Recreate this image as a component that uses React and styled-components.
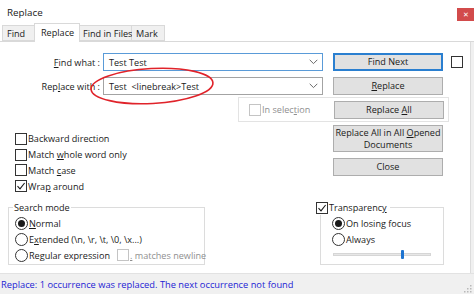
import React from "react";
import styled, { createGlobalStyle } from "styled-components";

const GlobalStyle = createGlobalStyle`
  html, body { margin: 0; padding: 0; background: #ffffff; }
  body { font-family: "Open Sans", "Noto Sans", "Liberation Sans", sans-serif; font-size: 9.1px; color: #1a1a1a; }
  * { box-sizing: border-box; }
`;

const Window = styled.div`
  width: 474px;
  height: 294px;
  display: flex;
  flex-direction: column;
  background: #ffffff;
  overflow: hidden;
`;

const TitleBar = styled.div`
  height: 24px;
  display: flex;
  align-items: center;
  justify-content: space-between;
  padding-left: 7px;
  font-size: 9.8px;
`;

const CloseButton = styled.div`
  width: 17px;
  height: 13px;
  margin-top: 8px;
  align-self: flex-start;
  background: #d24b4b;
  color: #fff;
  font-size: 7px;
  line-height: 13px;
  text-align: center;
`;

const TabStrip = styled.div`
  height: 18px;
  display: flex;
  align-items: flex-end;
  padding-left: 2px;
  border-bottom: 1px solid #d9d9d9;
`;

const Tab = styled.div`
  height: ${(p) => (p.$active ? "19px" : "16px")};
  width: ${(p) => p.$w}px;
  margin-bottom: ${(p) => (p.$active ? "-1px" : "0")};
  margin-left: ${(p) => (p.$active ? "-1px" : "0")};
  margin-right: ${(p) => (p.$active ? "-1px" : "0")};
  padding-left: ${(p) => (p.$active ? "6px" : "4px")};
  padding-bottom: ${(p) => (p.$active ? "2px" : "0")};
  background: ${(p) => (p.$active ? "#ffffff" : "#f0f0f0")};
  border: 1px solid #d9d9d9;
  border-bottom: ${(p) => (p.$active ? "none" : "1px solid #d9d9d9")};
  border-left: ${(p) => (p.$first || p.$active ? "1px solid #d9d9d9" : "none")};
  display: flex;
  align-items: center;
  white-space: nowrap;
  position: relative;
  z-index: ${(p) => (p.$active ? 1 : 0)};
`;

const Main = styled.div`
  display: flex;
  background: #f0f0f0;
`;

const Panel = styled.div`
  position: relative;
  width: 471px;
  height: 231px;
  background: #ffffff;
  border-right: 1px solid #dcdcdc;
  display: flex;
  flex-direction: column;
  padding-top: 11px;
`;

const FieldRow = styled.div`
  display: grid;
  grid-template-columns: 103px 230px 118px 12px;
  height: 18px;
  margin-top: ${(p) => p.$mt || 0}px;
  align-items: center;
`;

const FieldLabel = styled.div`
  text-align: right;
  padding-right: 3px;
  white-space: nowrap;
`;

const Combo = styled.div`
  height: 18px;
  width: 220px;
  border: 1px solid ${(p) => (p.$focus ? "#5a9bd8" : "#a3a3a3")};
  background: #fff;
  display: flex;
  align-items: center;
  justify-content: space-between;
  padding: 0 4px 0 5px;
  white-space: pre;
`;

const DialogButton = styled.div`
  width: 110px;
  height: ${(p) => p.$h || 18}px;
  background: #e1e1e1;
  border: 1px solid ${(p) => (p.$default ? "#2a7fd0" : "#adadad")};
  box-shadow: ${(p) => (p.$default ? "inset 0 0 0 1px #2a7fd0" : "none")};
  display: flex;
  align-items: center;
  justify-content: center;
  text-align: center;
  line-height: 12px;
  flex-shrink: 0;
`;

const ButtonText = styled.span`
  display: block;
  white-space: pre-line;
`;

const BoxShape = styled.span`
  width: 12px;
  height: 12px;
  border: 1px solid ${(p) => (p.$disabled ? "#c4c4c4" : "#333333")};
  background: #fff;
  display: inline-flex;
  align-items: center;
  justify-content: center;
  flex-shrink: 0;
`;

const RadioShape = styled.span`
  width: 13px;
  height: 13px;
  border-radius: 50%;
  border: 1px solid #333333;
  background: #fff;
  display: inline-flex;
  align-items: center;
  justify-content: center;
  flex-shrink: 0;
  &::after {
    content: "";
    width: 7px;
    height: 7px;
    border-radius: 50%;
    background: ${(p) => (p.$on ? "#1a1a1a" : "transparent")};
  }
`;

const U = styled.span`
  text-decoration: underline;
  text-underline-offset: 1px;
`;

const Option = styled.div`
  display: flex;
  align-items: center;
  height: 16px;
  gap: 1px;
  color: ${(p) => (p.$disabled ? "#8f8f8f" : "inherit")};
  white-space: nowrap;
  margin-left: ${(p) => p.$ml || 0}px;
`;

const SelectionGroup = styled.div`
  margin-top: 2px;
  margin-left: 238px;
  width: 211px;
  height: 25px;
  border: 1px solid #e3e3e3;
  display: flex;
  align-items: center;
  padding-left: 10px;
  padding-right: 4px;
  justify-content: space-between;
`;

const Middle = styled.div`
  display: flex;
  height: 72px;
`;

const OptionsList = styled.div`
  padding-left: 15px;
  margin-top: 9px;
  display: flex;
  flex-direction: column;
`;

const ButtonColumn = styled.div`
  margin-left: auto;
  margin-right: 27px;
  margin-top: 3px;
  display: flex;
  flex-direction: column;
  gap: 6px;
`;

const BottomRow = styled.div`
  display: flex;
  margin-top: 13px;
`;

const GroupBox = styled.div`
  position: relative;
  border: 1px solid #dcdcdc;
  height: 58px;
  width: ${(p) => p.$w}px;
  margin-left: ${(p) => p.$ml || "0"};
  margin-right: ${(p) => p.$mr || 0}px;
  padding: ${(p) => p.$pad};
  display: flex;
  flex-direction: column;
`;

const GroupTitle = styled.div`
  position: absolute;
  top: -8px;
  left: ${(p) => p.$left}px;
  background: #fff;
  padding: 0 ${(p) => p.$padR || 1}px 0 1px;
  display: flex;
  align-items: center;
  gap: 1px;
  height: 15px;
  white-space: nowrap;
`;

const SliderRow = styled.div`
  height: 14px;
  display: flex;
  align-items: center;
  padding-left: 1px;
`;

const Track = styled.div`
  position: relative;
  width: 98px;
  height: 3px;
  background: #e7e7e7;
  border: 1px solid #d6d6d6;
`;

const Thumb = styled.div`
  position: absolute;
  left: 67px;
  top: -4px;
  width: 3px;
  height: 9px;
  background: #1e74d0;
  border-radius: 1px;
`;

const StatusBar = styled.div`
  height: 21px;
  background: #f0f0f0;
  border-top: 1px solid #e2e2e2;
  display: flex;
  align-items: center;
  justify-content: space-between;
  padding-left: 1px;
  color: #2323d4;
  font-size: 9.3px;
`;

const Grip = styled.svg`
  align-self: flex-end;
  margin-right: 2px;
  margin-bottom: 1px;
`;

const Annotation = styled.svg`
  position: absolute;
  left: 86px;
  top: 22px;
  pointer-events: none;
`;

const Chevron = () => (
  <svg width="9" height="6" viewBox="0 0 9 6">
    <path d="M0.7 0.8 L4.5 4.6 L8.3 0.8" stroke="#6a6a6a" strokeWidth="1" fill="none" />
  </svg>
);

const CheckBox = ({ checked, disabled }) => (
  <BoxShape $disabled={disabled}>
    {checked && (
      <svg width="10" height="10" viewBox="0 0 10 10">
        <path d="M1.5 5.2 L4 7.8 L8.6 2" stroke="#1a1a1a" strokeWidth="1.1" fill="none" />
      </svg>
    )}
  </BoxShape>
);

export default function App() {
  return (
    <>
      <GlobalStyle />
      <Window>
        <TitleBar>
          <span>Replace</span>
          <CloseButton>✕</CloseButton>
        </TitleBar>
        <TabStrip>
          <Tab $w={33} $first>Find</Tab>
          <Tab $w={46} $active>Replace</Tab>
          <Tab $w={53}>Find in Files</Tab>
          <Tab $w={33}>Mark</Tab>
        </TabStrip>
        <Main>
          <Panel>
            <FieldRow>
              <FieldLabel>
                <U>F</U>ind what :
              </FieldLabel>
              <Combo $focus>
                <span>Test Test</span>
                <Chevron />
              </Combo>
              <DialogButton $default>
                <ButtonText>Find Next</ButtonText>
              </DialogButton>
              <CheckBox />
            </FieldRow>
            <FieldRow $mt={6}>
              <FieldLabel>
                Rep<U>l</U>ace with :
              </FieldLabel>
              <Combo>
                <span>Test  &lt;linebreak&gt;Test</span>
                <Chevron />
              </Combo>
              <DialogButton>
                <ButtonText>
                  <U>R</U>eplace
                </ButtonText>
              </DialogButton>
            </FieldRow>
            <SelectionGroup>
              <Option $disabled>
                <CheckBox disabled />
                <span>
                  In selec<U>t</U>ion
                </span>
              </Option>
              <DialogButton>
                <ButtonText>
                  Replace <U>A</U>ll
                </ButtonText>
              </DialogButton>
            </SelectionGroup>
            <Middle>
              <OptionsList>
                <Option>
                  <CheckBox />
                  <span>Backward direction</span>
                </Option>
                <Option>
                  <CheckBox />
                  <span>
                    Match <U>w</U>hole word only
                  </span>
                </Option>
                <Option>
                  <CheckBox />
                  <span>
                    Match <U>c</U>ase
                  </span>
                </Option>
                <Option>
                  <CheckBox checked />
                  <span>
                    Wra<U>p</U> around
                  </span>
                </Option>
              </OptionsList>
              <ButtonColumn>
                <DialogButton $h={27}>
                  <ButtonText>
                    Replace All in All <U>O</U>pened
                    <br />
                    Documents
                  </ButtonText>
                </DialogButton>
                <DialogButton>
                  <ButtonText>Close</ButtonText>
                </DialogButton>
              </ButtonColumn>
            </Middle>
            <BottomRow>
              <GroupBox $w={197} $ml="8px" $pad="7px 0 0 6px">
                <GroupTitle $left={4}>Search mode</GroupTitle>
                <Option>
                  <RadioShape $on />
                  <span>
                    <U>N</U>ormal
                  </span>
                </Option>
                <Option>
                  <RadioShape />
                  <span>
                    E<U>x</U>tended (\n, \r, \t, \0, \x...)
                  </span>
                </Option>
                <Option>
                  <RadioShape />
                  <span>
                    Re<U>g</U>ular expression
                  </span>
                  <Option $disabled $ml={6}>
                    <CheckBox disabled />
                    <span>
                      <U>.</U> matches newline
                    </span>
                  </Option>
                </Option>
              </GroupBox>
              <GroupBox $w={124} $ml="auto" $mr={26} $pad="7px 0 0 11px">
                <GroupTitle $left={-6} $padR={3}>
                  <CheckBox checked />
                  <span>
                    Transparenc<U>y</U>
                  </span>
                </GroupTitle>
                <Option>
                  <RadioShape $on />
                  <span>On losing focus</span>
                </Option>
                <Option>
                  <RadioShape />
                  <span>Always</span>
                </Option>
                <SliderRow>
                  <Track>
                    <Thumb />
                  </Track>
                </SliderRow>
              </GroupBox>
            </BottomRow>
            <Annotation width="134" height="44" viewBox="0 0 134 44">
              <ellipse
                cx="66"
                cy="22"
                rx="61"
                ry="17.5"
                transform="rotate(-3 66 22)"
                fill="none"
                stroke="#e0232a"
                strokeWidth="1.6"
              />
            </Annotation>
          </Panel>
        </Main>
        <StatusBar>
          <span>Replace: 1 occurrence was replaced. The next occurrence not found</span>
          <Grip width="8" height="8" viewBox="0 0 8 8">
            <rect x="6" y="0" width="1.5" height="1.5" fill="#b8b8b8" />
            <rect x="3" y="3" width="1.5" height="1.5" fill="#b8b8b8" />
            <rect x="6" y="3" width="1.5" height="1.5" fill="#b8b8b8" />
            <rect x="0" y="6" width="1.5" height="1.5" fill="#b8b8b8" />
            <rect x="3" y="6" width="1.5" height="1.5" fill="#b8b8b8" />
            <rect x="6" y="6" width="1.5" height="1.5" fill="#b8b8b8" />
          </Grip>
        </StatusBar>
      </Window>
    </>
  );
}
